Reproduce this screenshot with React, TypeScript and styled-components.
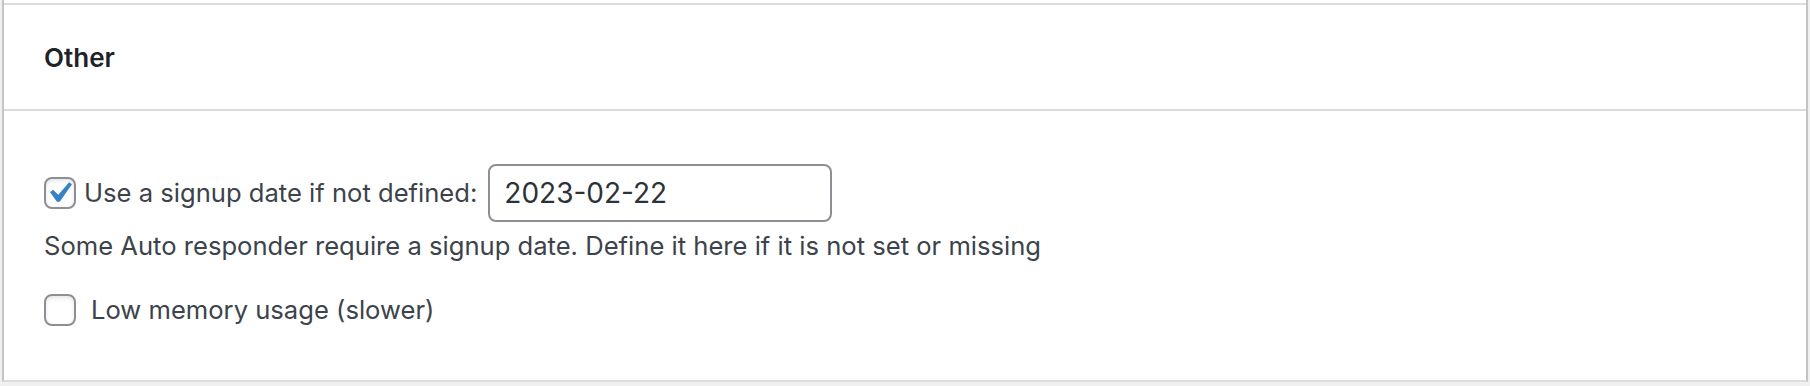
import styled, { createGlobalStyle } from "styled-components";

const GlobalStyle = createGlobalStyle`
  html, body {
    margin: 0;
    padding: 0;
    background: #f0f0f1;
  }
  body {
    font-family: Inter, "Noto Sans", "Liberation Sans", sans-serif;
    color: #3c434a;
  }
`;

const Panel = styled.div`
  background: #fff;
  border-left: 2px solid #c3c4c7;
  border-right: 2px solid #c3c4c7;
  border-bottom: 2px solid #dcdcde;
  margin: 0 2px;
  padding-top: 3px;
`;

const Header = styled.div`
  display: flex;
  align-items: center;
  height: 104px;
  padding: 0 40px;
  border-top: 2px solid #dcdcde;
  border-bottom: 2px solid #dcdcde;
`;

const Title = styled.h2`
  margin: 0;
  font-size: 26px;
  font-weight: 600;
  color: #1d2327;
`;

const Body = styled.div`
  display: flex;
  flex-direction: column;
  padding: 53px 40px 0;
  height: 216px;
`;

const Row = styled.label`
  display: flex;
  align-items: center;
  font-size: 25.6px;
  line-height: 36px;
  gap: ${({ $gap }: { $gap?: number }) => $gap ?? 8}px;
`;

const Box = styled.span`
  flex: none;
  width: 28px;
  height: 28px;
  border: 2px solid #8c8f94;
  border-radius: 8px;
  background: #fff;
  box-shadow: inset 0 2px 4px rgba(0, 0, 0, 0.1);
  display: flex;
  overflow: visible;
`;

const Check = styled.svg`
  flex: none;
  width: 42px;
  height: 42px;
  margin: -7px 0 0 -8px;
`;

const DateInput = styled.input`
  width: 344px;
  height: 58px;
  box-sizing: border-box;
  margin-left: 3px;
  padding: 0 14px;
  border: 2px solid #8c8f94;
  border-radius: 8px;
  font-family: inherit;
  font-size: 28px;
  color: #2c3338;
  background: #fff;
  outline: none;
`;

const Description = styled.p`
  margin: 6px 0 0;
  font-size: 25.6px;
  line-height: 36px;
`;

const Spacer = styled.div`
  height: 28px;
`;

const Checkbox = ({ checked }: { checked?: boolean }) => (
  <Box>
    {checked && (
      <Check viewBox="0 0 20 20">
        <path
          d="M14.83 4.89l1.34.94-5.81 8.38H9.02L5.78 9.67l1.34-1.25 2.57 2.4z"
          fill="#3582c4"
        />
      </Check>
    )}
  </Box>
);

const App = () => (
  <>
    <GlobalStyle />
    <Panel>
      <Header>
        <Title>Other</Title>
      </Header>
      <Body>
        <Row>
          <Checkbox checked />
          Use a signup date if not defined:
          <DateInput defaultValue="2023-02-22" />
        </Row>
        <Description>
          Some Auto responder require a signup date. Define it here if it is
          not set or missing
        </Description>
        <Spacer />
        <Row $gap={15}>
          <Checkbox />
          Low memory usage (slower)
        </Row>
      </Body>
    </Panel>
  </>
);

export default App;
